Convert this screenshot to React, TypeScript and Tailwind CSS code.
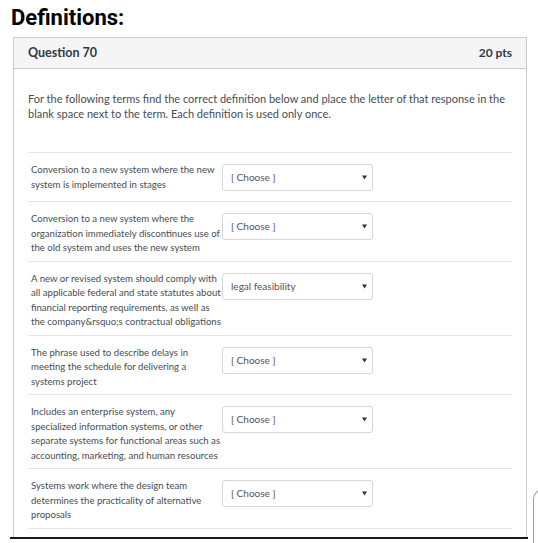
import React from 'react';

interface Row {
  lines: string[];
  answer: string;
}

const rows: Row[] = [
  {
    lines: ['Conversion to a new system where the new', 'system is implemented in stages'],
    answer: '[ Choose ]',
  },
  {
    lines: [
      'Conversion to a new system where the',
      'organization immediately discontinues use of',
      'the old system and uses the new system',
    ],
    answer: '[ Choose ]',
  },
  {
    lines: [
      'A new or revised system should comply with',
      'all applicable federal and state statutes about',
      'financial reporting requirements, as well as',
      'the company&rsquo;s contractual obligations',
    ],
    answer: 'legal feasibility',
  },
  {
    lines: [
      'The phrase used to describe delays in',
      'meeting the schedule for delivering a',
      'systems project',
    ],
    answer: '[ Choose ]',
  },
  {
    lines: [
      'Includes an enterprise system, any',
      'specialized information systems, or other',
      'separate systems for functional areas such as',
      'accounting, marketing, and human resources',
    ],
    answer: '[ Choose ]',
  },
  {
    lines: [
      'Systems work where the design team',
      'determines the practicality of alternative',
      'proposals',
    ],
    answer: '[ Choose ]',
  },
  {
    // next row, cut off by the bottom edge of the screenshot
    lines: ['', ''],
    answer: '',
  },
];

function SelectBox({ value }: { value: string }) {
  return (
    <div className="mb-[10px] flex h-[27px] w-[151px] shrink-0 items-center justify-between rounded-[3px] border border-[#d3d6d9] bg-white pl-[8px] pr-[5px]">
      <span className="text-[10px] text-[#50565c]">{value}</span>
      <svg width="5" height="5" viewBox="0 0 5 5" className="text-[#333]">
        <path d="M0 0.5 L5 0.5 L2.5 4.5 Z" fill="currentColor" />
      </svg>
    </div>
  );
}

export default function App() {
  return (
    <div className="relative h-[543px] w-[538px] overflow-hidden bg-white" style={{ fontFamily: 'Lato, "Open Sans", sans-serif' }}>
      <div className="ml-[10px] h-[539px] w-[518px] overflow-hidden border-b-2 border-[#1a1a1a]">
        <h1
          className="ml-[1px] pt-[5px] text-[22px] font-bold leading-[26px] text-black"
          style={{ fontFamily: 'Roboto, "Liberation Sans", sans-serif' }}
        >
          Definitions:
        </h1>
        <div className="ml-[3px] mt-[6px] w-[514px] border border-[#c7cdd1]">
          <div className="flex h-[31px] items-center justify-between border-b border-[#c7cdd1] bg-[#f5f5f5] px-[14px]">
            <span className="text-[12.5px] font-bold text-[#2d3b45]">Question 70</span>
            <span className="text-[12px] font-bold text-[#2d3b45]">20 pts</span>
          </div>
          <div className="px-[14px] pt-[22px]">
            <p className="text-[11px] leading-[15px] text-[#474d53]">
              For the following terms find the correct definition below and place the letter of that response in the
              blank space next to the term. Each definition is used only once.
            </p>
            <div className="mt-[31px] border-t border-[#e2e4e6]">
              {rows.map((row, i) => (
                <div key={i} className="flex items-start border-b border-[#e2e4e6] pt-[11px]">
                  <div className="-mt-[1px] w-[194px] shrink-0 pb-[5px] pl-[3px] text-[9.6px] leading-[14.5px] text-[#474d53]">
                    {row.lines.map((l, j) => (
                      <div key={j} className="h-[14.5px] whitespace-nowrap">
                        {l}
                      </div>
                    ))}
                  </div>
                  <SelectBox value={row.answer} />
                </div>
              ))}
            </div>
          </div>
        </div>
      </div>
      <div className="absolute left-[533px] top-[489px] h-[60px] w-[10px] rounded-tl-[10px] border-l border-t border-[#9aa0a6]" />
    </div>
  );
}
